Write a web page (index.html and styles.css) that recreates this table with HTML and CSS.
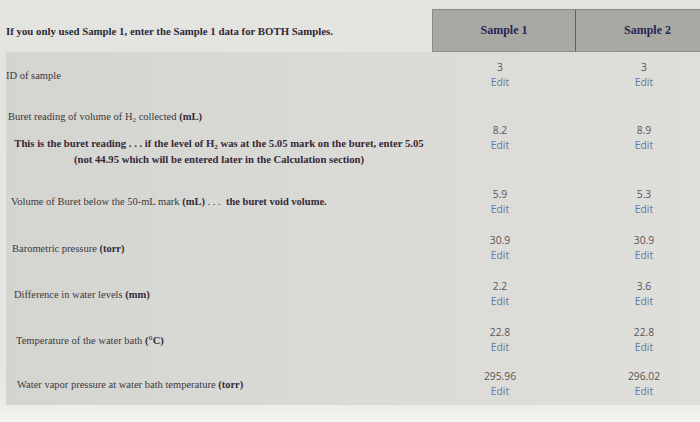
FILE: index.html
```html
<!DOCTYPE html>
<html>
<head>
<meta charset="utf-8">
<link rel="stylesheet" href="styles.css">
</head>
<body>
<div class="page">
  <div class="sheet">
    <div class="title">If you only used Sample 1, enter the Sample 1 data for BOTH Samples.</div>
    <div class="hcell first">Sample 1</div>
    <div class="hcell">Sample 2</div>

    <div class="tbody">
      <div class="row r1">
        <div class="label">ID of sample</div>
        <div class="val"><span class="num">3</span><span class="edit">Edit</span></div>
        <div class="val"><span class="num">3</span><span class="edit">Edit</span></div>
      </div>
      <div class="row r2">
        <div class="label">
          <div class="line">Buret reading of volume of H<sub>2</sub> collected <b>(mL)</b></div>
          <div class="note">This is the buret reading . . . if the level of H<sub>2</sub> was at the 5.05 mark on the buret, enter 5.05<br>(not 44.95 which will be entered later in the Calculation section)</div>
        </div>
        <div class="val"><span class="num">8.2</span><span class="edit">Edit</span></div>
        <div class="val"><span class="num">8.9</span><span class="edit">Edit</span></div>
      </div>
      <div class="row r3">
        <div class="label">Volume of Buret below the 50-mL mark <b>(mL)</b> . . .&nbsp; <b>the buret void volume.</b></div>
        <div class="val"><span class="num">5.9</span><span class="edit">Edit</span></div>
        <div class="val"><span class="num">5.3</span><span class="edit">Edit</span></div>
      </div>
      <div class="row r4">
        <div class="label">Barometric pressure <b>(torr)</b></div>
        <div class="val"><span class="num">30.9</span><span class="edit">Edit</span></div>
        <div class="val"><span class="num">30.9</span><span class="edit">Edit</span></div>
      </div>
      <div class="row r5">
        <div class="label">Difference in water levels <b>(mm)</b></div>
        <div class="val"><span class="num">2.2</span><span class="edit">Edit</span></div>
        <div class="val"><span class="num">3.6</span><span class="edit">Edit</span></div>
      </div>
      <div class="row r6">
        <div class="label">Temperature of the water bath <b>(°C)</b></div>
        <div class="val"><span class="num">22.8</span><span class="edit">Edit</span></div>
        <div class="val"><span class="num">22.8</span><span class="edit">Edit</span></div>
      </div>
      <div class="row r7">
        <div class="label">Water vapor pressure at water bath temperature <b>(torr)</b></div>
        <div class="val"><span class="num">295.96</span><span class="edit">Edit</span></div>
        <div class="val"><span class="num">296.02</span><span class="edit">Edit</span></div>
      </div>
    </div>
  </div>
</div>
</body>
</html>
```

FILE: styles.css
```css
html, body {
  margin: 0;
  padding: 0;
}
body {
  width: 700px;
  height: 422px;
  overflow: hidden;
  background: #e7e7e3;
  font-family: "Liberation Serif", "Times New Roman", serif;
}
.page {
  width: 700px;
  height: 422px;
  overflow: hidden;
  background: linear-gradient(180deg, #e3e3df 0%, #e6e6e2 90%, #ededea 97%, #f4f4f2 100%);
}
.sheet {
  display: grid;
  grid-template-columns: 426px 144px 144px;
  grid-template-rows: 52px auto;
  margin-left: 6px;
  width: 714px;
}
.title {
  align-self: start;
  padding-top: 25px;
  font-size: 10.8px;
  font-weight: bold;
  color: #2c2a36;
  white-space: nowrap;
}
.hcell {
  margin-top: 9px;
  background: #a9a8a3;
  border-top: 1px solid #8a8984;
  border-bottom: 1px solid #8f8e89;
  border-right: 1px solid #62615d;
  display: flex;
  align-items: center;
  justify-content: center;
  font-size: 12px;
  font-weight: bold;
  color: #262657;
  padding-bottom: 1px;
}
.hcell.first {
  border-left: 1px solid #8a8984;
}
.tbody {
  grid-column: 1 / 4;
  display: grid;
  grid-template-rows: 46px 80px 47px 46px 46px 46px 42px;
  background: linear-gradient(90deg, #d4d4d0 0%, #d9d9d5 40%, #dddcd8 70%, #dededa 100%);
}
.row {
  display: grid;
  grid-template-columns: 426px 144px 144px;
  align-items: center;
}
.label {
  font-size: 10.5px;
  color: #3b3a3c;
  white-space: nowrap;
}
.label b {
  color: #352a38;
}
.r1 .label { padding-left: 0; }
.r2 .label { padding-left: 2px; }
.r3 .label { padding-left: 5px; }
.r4 .label { padding-left: 6px; }
.r5 .label { padding-left: 8px; }
.r6 .label { padding-left: 10px; }
.r7 .label { padding-left: 11px; }
sub {
  font-size: 7px;
  line-height: 0;
  vertical-align: -2px;
}
.r2 .label {
  align-self: start;
  padding-top: 13px;
}
.note {
  margin-top: 13px;
  text-align: center;
  font-weight: bold;
  font-size: 10.7px;
  color: #352a38;
  line-height: 16px;
  padding-right: 2px;
}
.val {
  display: flex;
  flex-direction: column;
  align-items: center;
  padding-right: 8px;
  font-family: "Open Sans", "DejaVu Sans", sans-serif;
  font-size: 10.3px;
  line-height: 15px;
}
.num {
  color: #575757;
}
.edit {
  color: #5c7b9c;
}
```
